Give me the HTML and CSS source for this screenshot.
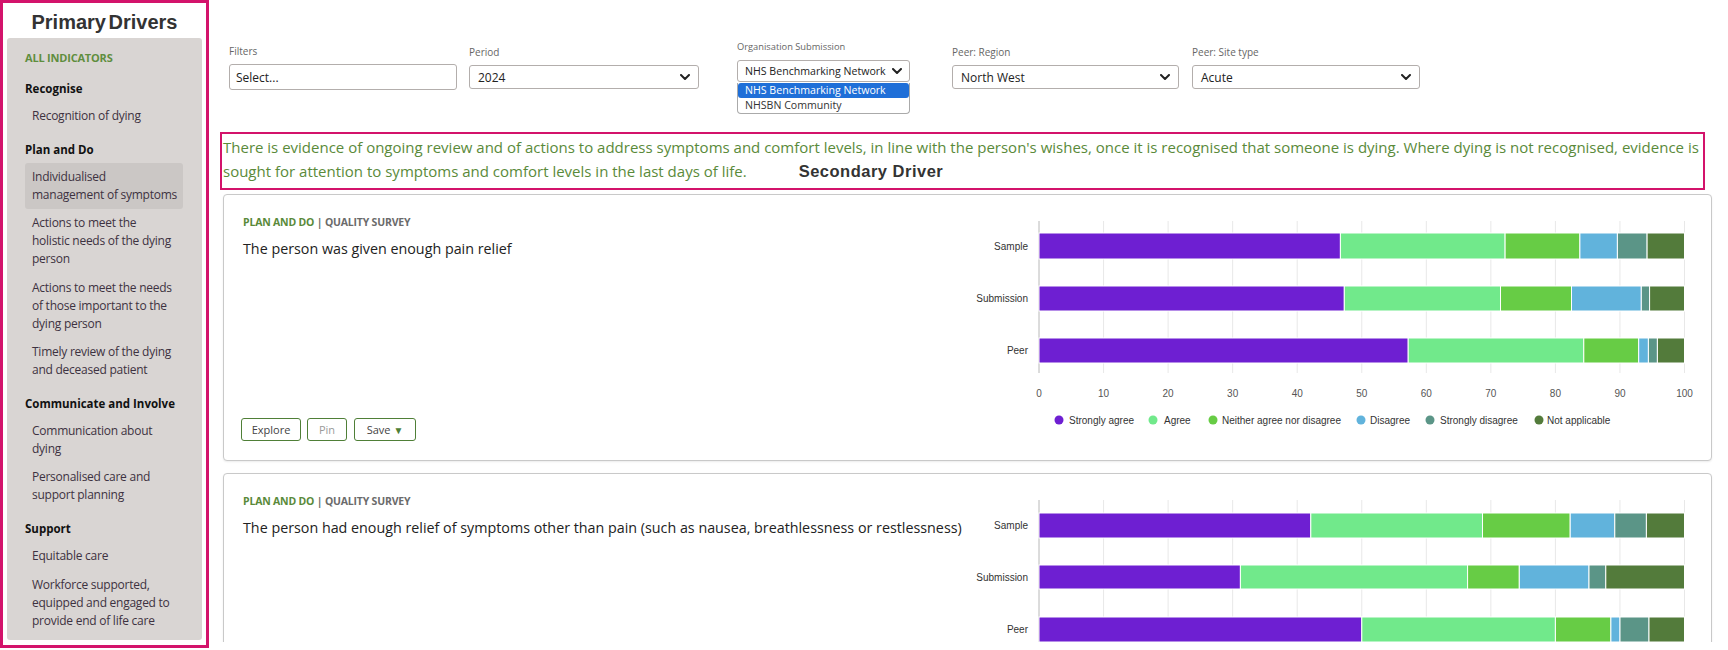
FILE: index.html
```html
<!DOCTYPE html>
<html lang="en">
<head>
<meta charset="utf-8">
<title>Primary Drivers</title>
<link rel="stylesheet" href="styles.css">
</head>
<body>
<div class="page">
  <aside class="sidebar">
    <h1 class="sidebar-title">Primary Drivers</h1>
    <nav class="nav-panel">
      <div class="nav-all">ALL INDICATORS</div>
      <div class="nav-group">Recognise</div>
      <a class="nav-item">Recognition of dying</a>
      <div class="nav-group">Plan and Do</div>
      <a class="nav-item is-active">Individualised management of symptoms</a>
      <a class="nav-item">Actions to meet the<br>holistic needs of the dying person</a>
      <a class="nav-item">Actions to meet the needs of those important to the dying person</a>
      <a class="nav-item">Timely review of the dying and deceased patient</a>
      <div class="nav-group">Communicate and Involve</div>
      <a class="nav-item">Communication about dying</a>
      <a class="nav-item">Personalised care and support planning</a>
      <div class="nav-group">Support</div>
      <a class="nav-item">Equitable care</a>
      <a class="nav-item">Workforce supported, equipped and engaged to provide end of life care</a>
    </nav>
  </aside>

  <main class="main">
    <div class="filters">
      <div class="filter f-filters">
        <span class="filter-label">Filters</span>
        <div class="control control-input">Select...</div>
      </div>
      <div class="filter f-period">
        <span class="filter-label">Period</span>
        <div class="control"><span>2024</span><svg class="chev" viewBox="0 0 10 6"><path d="M1 1l4 4 4-4"/></svg></div>
      </div>
      <div class="filter f-org">
        <span class="filter-label">Organisation Submission</span>
        <div class="control control-sm"><span>NHS Benchmarking Network</span><svg class="chev" viewBox="0 0 10 6"><path d="M1 1l4 4 4-4"/></svg></div>
        <ul class="listbox">
          <li class="option is-selected">NHS Benchmarking Network</li>
          <li class="option">NHSBN Community</li>
        </ul>
      </div>
      <div class="filter f-region">
        <span class="filter-label">Peer: Region</span>
        <div class="control"><span>North West</span><svg class="chev" viewBox="0 0 10 6"><path d="M1 1l4 4 4-4"/></svg></div>
      </div>
      <div class="filter f-site">
        <span class="filter-label">Peer: Site type</span>
        <div class="control"><span>Acute</span><svg class="chev" viewBox="0 0 10 6"><path d="M1 1l4 4 4-4"/></svg></div>
      </div>
    </div>

    <div class="driver">There is evidence of ongoing review and of actions to address symptoms and comfort levels, in line with the person's wishes, once it is recognised that someone is dying. Where dying is not recognised, evidence is sought for attention to symptoms and comfort levels in the last days of life.<span class="driver-tag">Secondary Driver</span></div>

    <section class="card">
      <div class="card-body">
        <div class="card-kicker"><span class="kicker-area">PLAN AND DO</span> | QUALITY SURVEY</div>
        <div class="card-title">The person was given enough pain relief</div>
        <div class="card-actions">
          <button class="btn btn-explore">Explore</button>
          <button class="btn btn-pin">Pin</button>
          <button class="btn btn-save">Save <span class="caret">&#9660;</span></button>
        </div>
      </div>
      <svg class="chart" viewBox="0 0 739 265" width="739" height="265">
        <g class="grid">
          <line x1="131.55" y1="26" x2="131.55" y2="178"/>
          <line x1="196.1" y1="26" x2="196.1" y2="178"/>
          <line x1="260.65" y1="26" x2="260.65" y2="178"/>
          <line x1="325.2" y1="26" x2="325.2" y2="178"/>
          <line x1="389.75" y1="26" x2="389.75" y2="178"/>
          <line x1="454.3" y1="26" x2="454.3" y2="178"/>
          <line x1="518.85" y1="26" x2="518.85" y2="178"/>
          <line x1="583.4" y1="26" x2="583.4" y2="178"/>
          <line x1="647.95" y1="26" x2="647.95" y2="178"/>
          <line x1="712.5" y1="26" x2="712.5" y2="178"/>
        </g>
        <line class="axis" x1="67" y1="26" x2="67" y2="178"/>
        <g class="bars">
          <rect class="s-sa" x="67" y="38" width="301.4" height="26"/>
          <rect class="s-a" x="368.4" y="38" width="164.7" height="26"/>
          <rect class="s-n" x="533.1" y="38" width="74.8" height="26"/>
          <rect class="s-d" x="607.9" y="38" width="37.5" height="26"/>
          <rect class="s-sd" x="645.4" y="38" width="29.7" height="26"/>
          <rect class="s-na" x="675.1" y="38" width="37.4" height="26"/>

          <rect class="s-sa" x="67" y="91" width="305.3" height="25"/>
          <rect class="s-a" x="372.3" y="91" width="156.2" height="25"/>
          <rect class="s-n" x="528.5" y="91" width="71" height="25"/>
          <rect class="s-d" x="599.5" y="91" width="69.8" height="25"/>
          <rect class="s-sd" x="669.3" y="91" width="8.3" height="25"/>
          <rect class="s-na" x="677.6" y="91" width="34.9" height="25"/>

          <rect class="s-sa" x="67" y="143" width="369.2" height="25"/>
          <rect class="s-a" x="436.2" y="143" width="175.6" height="25"/>
          <rect class="s-n" x="611.8" y="143" width="54.9" height="25"/>
          <rect class="s-d" x="666.7" y="143" width="9.7" height="25"/>
          <rect class="s-sd" x="676.4" y="143" width="9" height="25"/>
          <rect class="s-na" x="685.4" y="143" width="27.1" height="25"/>
        </g>
        <g class="cat-labels">
          <text x="56" y="54.5">Sample</text>
          <text x="56" y="107">Submission</text>
          <text x="56" y="159">Peer</text>
        </g>
        <g class="x-labels">
          <text x="67" y="202">0</text>
          <text x="131.55" y="202">10</text>
          <text x="196.1" y="202">20</text>
          <text x="260.65" y="202">30</text>
          <text x="325.2" y="202">40</text>
          <text x="389.75" y="202">50</text>
          <text x="454.3" y="202">60</text>
          <text x="518.85" y="202">70</text>
          <text x="583.4" y="202">80</text>
          <text x="647.95" y="202">90</text>
          <text x="712.5" y="202">100</text>
        </g>
        <g class="legend">
          <circle class="s-sa" cx="87" cy="225" r="4.5"/><text x="97" y="228.5">Strongly agree</text>
          <circle class="s-a" cx="181" cy="225" r="4.5"/><text x="192" y="228.5">Agree</text>
          <circle class="s-n" cx="241" cy="225" r="4.5"/><text x="250" y="228.5">Neither agree nor disagree</text>
          <circle class="s-d" cx="389" cy="225" r="4.5"/><text x="398" y="228.5">Disagree</text>
          <circle class="s-sd" cx="458" cy="225" r="4.5"/><text x="468" y="228.5">Strongly disagree</text>
          <circle class="s-na" cx="567" cy="225" r="4.5"/><text x="575" y="228.5">Not applicable</text>
        </g>
      </svg>
    </section>

    <section class="card">
      <div class="card-body">
        <div class="card-kicker"><span class="kicker-area">PLAN AND DO</span> | QUALITY SURVEY</div>
        <div class="card-title">The person had enough relief of symptoms other than pain (such as nausea, breathlessness or restlessness)</div>
      </div>
      <svg class="chart" viewBox="0 0 739 265" width="739" height="265">
        <g class="grid">
          <line x1="131.55" y1="26" x2="131.55" y2="178"/>
          <line x1="196.1" y1="26" x2="196.1" y2="178"/>
          <line x1="260.65" y1="26" x2="260.65" y2="178"/>
          <line x1="325.2" y1="26" x2="325.2" y2="178"/>
          <line x1="389.75" y1="26" x2="389.75" y2="178"/>
          <line x1="454.3" y1="26" x2="454.3" y2="178"/>
          <line x1="518.85" y1="26" x2="518.85" y2="178"/>
          <line x1="583.4" y1="26" x2="583.4" y2="178"/>
          <line x1="647.95" y1="26" x2="647.95" y2="178"/>
          <line x1="712.5" y1="26" x2="712.5" y2="178"/>
        </g>
        <line class="axis" x1="67" y1="26" x2="67" y2="178"/>
        <g class="bars">
          <rect class="s-sa" x="67" y="39" width="271.8" height="25"/>
          <rect class="s-a" x="338.8" y="39" width="171.7" height="25"/>
          <rect class="s-n" x="510.5" y="39" width="87.7" height="25"/>
          <rect class="s-d" x="598.2" y="39" width="44.6" height="25"/>
          <rect class="s-sd" x="642.8" y="39" width="31.6" height="25"/>
          <rect class="s-na" x="674.4" y="39" width="38.1" height="25"/>

          <rect class="s-sa" x="67" y="91" width="201.4" height="24"/>
          <rect class="s-a" x="268.4" y="91" width="227.2" height="24"/>
          <rect class="s-n" x="495.6" y="91" width="51.7" height="24"/>
          <rect class="s-d" x="547.3" y="91" width="69.7" height="24"/>
          <rect class="s-sd" x="617" y="91" width="16.8" height="24"/>
          <rect class="s-na" x="633.8" y="91" width="78.7" height="24"/>

          <rect class="s-sa" x="67" y="143" width="322.8" height="25"/>
          <rect class="s-a" x="389.8" y="143" width="193.6" height="25"/>
          <rect class="s-n" x="583.4" y="143" width="55.5" height="25"/>
          <rect class="s-d" x="638.9" y="143" width="9.1" height="25"/>
          <rect class="s-sd" x="648" y="143" width="29" height="25"/>
          <rect class="s-na" x="677" y="143" width="35.5" height="25"/>
        </g>
        <g class="cat-labels">
          <text x="56" y="55">Sample</text>
          <text x="56" y="106.5">Submission</text>
          <text x="56" y="159">Peer</text>
        </g>
      </svg>
    </section>
  </main>
</div>
</body>
</html>
```

FILE: styles.css
```css
* { box-sizing: border-box; }

html, body {
  margin: 0;
  padding: 0;
  background: #fff;
}

body {
  font-family: "Open Sans", "Noto Sans", sans-serif;
  color: #222;
}

.page {
  display: flex;
  width: 1728px;
  height: 650px;
  overflow: hidden;
}

/* ---------- Sidebar ---------- */
.sidebar {
  flex: none;
  width: 209px;
  height: 648px;
  border: 3px solid #d3136b;
  display: flex;
  flex-direction: column;
}

.sidebar-title {
  margin: 0;
  padding-top: 3px;
  height: 35px;
  line-height: 32px;
  text-align: center;
  font-family: "Liberation Sans", Arial, sans-serif;
  font-weight: 700;
  font-size: 20px;
  word-spacing: -3px;
  color: #333;
}

.nav-panel {
  flex: 1;
  margin: 0 4px 5px 4px;
  padding: 12px 19px 0 18px;
  background: #d9d5d3;
  border-radius: 3px;
}

.nav-all {
  font-size: 11px;
  font-weight: 700;
  line-height: 16px;
  letter-spacing: -0.2px;
  color: #5f8e3e;
  padding-bottom: 3px;
}

.nav-group {
  margin: 11px 0 4px;
  font-size: 11.5px;
  font-weight: 700;
  line-height: 18px;
  color: #111;
}

.nav-item {
  display: block;
  padding: 5px 4px 5px 7px;
  font-size: 12px;
  line-height: 18.1px;
  letter-spacing: -0.25px;
  color: #3d3241;
  border-radius: 3px;
}

.nav-item.is-active {
  background: #cbc7c5;
}

/* ---------- Main ---------- */
.main {
  flex: 1;
  height: 642px;
  overflow: hidden;
  padding: 40px 16px 0 11px;
}

.filters {
  display: flex;
  align-items: flex-start;
  padding-left: 9px;
}

.filter {
  position: relative;
  margin-top: 5px;
}

.filter-label {
  display: block;
  margin-bottom: 6px;
  font-size: 10px;
  line-height: 14px;
  color: #666;
}

.f-filters { width: 228px; margin-top: 4px; }
.f-period  { width: 230px; margin-left: 12px; }
.f-org     { width: 173px; margin-left: 38px; margin-top: 0; }
.f-region  { width: 227px; margin-left: 42px; }
.f-site    { width: 228px; margin-left: 13px; }

.f-org .filter-label {
  font-size: 9.3px;
}

.control {
  height: 24px;
  display: flex;
  align-items: center;
  justify-content: space-between;
  padding: 0 8px 0 8px;
  border: 1px solid #b3aeac;
  border-radius: 3px;
  background: #fff;
  font-size: 12px;
  color: #222;
}

.control-input {
  height: 26px;
  padding-left: 6px;
}

.control-sm {
  height: 22px;
  padding: 0 7px;
  font-size: 10.6px;
}

.chev {
  flex: none;
  width: 10px;
  height: 6px;
  fill: none;
  stroke: #222;
  stroke-width: 2;
  stroke-linecap: round;
  stroke-linejoin: round;
}

.listbox {
  position: absolute;
  top: 43px;
  left: 0;
  width: 173px;
  margin: 0;
  padding: 0;
  list-style: none;
  background: #fff;
  border: 1px solid #aaa;
  border-top: none;
  border-radius: 0 0 4px 4px;
  font-size: 10.6px;
  line-height: 15px;
  color: #333;
}

.option {
  padding-left: 7px;
}

.option.is-selected {
  background: #1f6fd8;
  color: #fff;
  border-radius: 3px;
}

.driver {
  margin: 42px 7px 0 0;
  padding: 1px 3px 5px 1px;
  border: 2px solid #d3136b;
  font-size: 15px;
  line-height: 24px;
  color: #5a8a3a;
}

.driver-tag {
  margin-left: 52px;
  font-family: "Liberation Sans", Arial, sans-serif;
  font-weight: 700;
  font-size: 16.5px;
  line-height: 20px;
  letter-spacing: 0.5px;
  color: #333;
}

/* ---------- Cards ---------- */
.card {
  display: flex;
  margin: 4px 0 0 3px;
  border: 1px solid #c9c9c9;
  border-radius: 4px;
  background: #fff;
  box-shadow: 0 1px 2px rgba(0, 0, 0, 0.08);
}

.card + .card {
  margin-top: 12px;
}

.card-body {
  flex: 1;
  min-width: 0;
  display: flex;
  flex-direction: column;
  padding: 19px 0 19px 19px;
}

.card-kicker {
  font-size: 10.5px;
  font-weight: 700;
  letter-spacing: -0.2px;
  line-height: 16px;
  color: #6b6b6b;
}

.kicker-area {
  color: #5a8a3a;
}

.card-title {
  margin-top: 9px;
  font-size: 14.3px;
  line-height: 20px;
  color: #222;
  white-space: nowrap;
}

.card-actions {
  margin-top: auto;
  margin-left: -2px;
  display: flex;
  gap: 6px;
}

.btn {
  height: 23px;
  padding: 0;
  border: 1px solid #4f7f37;
  border-radius: 3px;
  background: #fff;
  font-family: inherit;
  font-size: 11px;
  color: #444;
}

.btn-explore { width: 60px; }
.btn-pin     { width: 40px; color: #9a9a9a; }
.btn-save    { width: 62px; margin-left: 1px; }

.caret {
  font-size: 10px;
  color: #4f7f37;
}

/* ---------- Chart ---------- */
.chart {
  flex: none;
  display: block;
  width: 739px;
  height: 265px;
}

.grid line {
  stroke: #e8e8e8;
  stroke-width: 1;
}

.axis {
  stroke: #b8b8b8;
  stroke-width: 1;
}

.bars rect {
  stroke: #fff;
  stroke-width: 1;
}

.cat-labels text {
  font-family: "Liberation Sans", Arial, sans-serif;
  font-size: 10px;
  fill: #333;
  text-anchor: end;
}

.x-labels text {
  font-family: "Liberation Sans", Arial, sans-serif;
  font-size: 10px;
  fill: #555;
  text-anchor: middle;
}

.legend text {
  font-family: "Liberation Sans", Arial, sans-serif;
  font-size: 10px;
  fill: #333;
}

.s-sa { fill: #6e1fd2; }
.s-a  { fill: #71e98b; }
.s-n  { fill: #67cc45; }
.s-d  { fill: #61b3dc; }
.s-sd { fill: #5b9587; }
.s-na { fill: #537b3b; }
```
